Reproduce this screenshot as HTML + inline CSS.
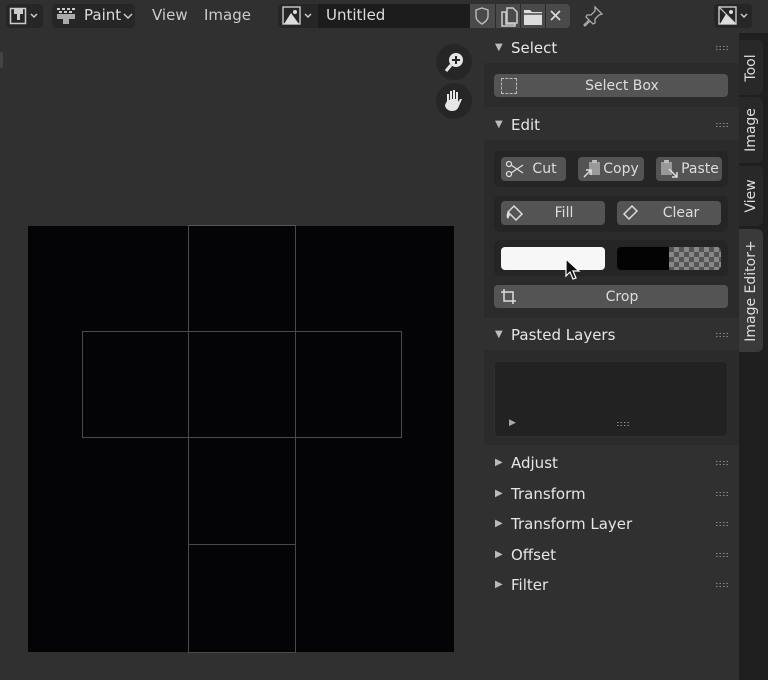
<!DOCTYPE html>
<html><head><meta charset="utf-8"><style>
*{margin:0;padding:0;box-sizing:border-box}
body{width:768px;height:680px;background:#303030;font-family:"DejaVu Sans","Liberation Sans",sans-serif;color:#ddd;position:relative;overflow:hidden;font-size:14px}
.a{position:absolute}
.btn{position:absolute;background:#545454;border-radius:4px;color:#ddd;font-size:14px;display:flex;align-items:center;justify-content:center}
.hdr{position:absolute;left:484px;width:255px;height:30px;font-size:15px;color:#e6e6e6}
.hdr .t{position:absolute;left:27px;top:6px}
.hdr .tri{position:absolute;left:11px;top:9px;font-size:10px;color:#bbb}
.dots{position:absolute;right:10px;top:12px;width:14px;height:5px;background-image:radial-gradient(#888 0.7px,transparent 0.8px);background-size:3.5px 3px}
.tab{position:absolute;left:739px;width:24px;background:#282828;border-radius:0 6px 6px 0;color:#ddd;font-size:14px}
.tab span{position:absolute;left:50%;top:50%;transform:translate(-50%,-50%) rotate(-90deg);white-space:nowrap}
.ln{position:absolute;background:#4a4a4a}
</style></head><body>
<div class="a" style="left:0;top:0;width:768px;height:32px;background:#303030"></div>
<div class="a" style="left:6px;top:4px;width:37px;height:24px;background:#262626;border-radius:4px"></div>
<svg class="a" style="left:9px;top:6px" width="32" height="20"><rect x="1.5" y="2.5" width="15" height="15" fill="none" stroke="#ccc" stroke-width="1.5"/><rect x="5" y="3" width="9" height="5" fill="#ccc"/><rect x="8" y="6" width="3" height="8" fill="#ccc"/><path d="M22 8l3 3 3-3" fill="none" stroke="#ccc" stroke-width="1.5"/></svg>
<div class="a" style="left:52px;top:4px;width:83px;height:24px;background:#262626;border-radius:4px"></div>
<svg class="a" style="left:56px;top:7px" width="20" height="18"><path d="M1 1h3v2H1zM6 1h3v2H6zM11 1h3v2h-3zM16 1h3v2h-3zM3 4h3v2H3zM8 4h3v2H8zM13 4h3v2h-3z" fill="#ccc"/><path d="M1 7h18v5h-6v5H7v-5H1z" fill="#aaa"/></svg>
<div class="a" style="left:84px;top:6px;font-size:15px;color:#ddd">Paint</div>
<svg class="a" style="left:123px;top:13px" width="10" height="6"><path d="M1 1l4 4 4-4" fill="none" stroke="#ccc" stroke-width="1.5"/></svg>
<div class="a" style="left:152px;top:6px;font-size:15px;color:#ccc">View</div>
<div class="a" style="left:204px;top:6px;font-size:15px;color:#ccc">Image</div>
<div class="a" style="left:278px;top:4px;width:40px;height:24px;background:#262626;border-radius:4px 0 0 4px"></div>
<svg class="a" style="left:282px;top:6px" width="34" height="20"><rect x="1" y="1" width="17" height="17" fill="none" stroke="#ccc" stroke-width="1.4"/><path d="M2 18l7-11 8 11z" fill="#ddd"/><circle cx="13" cy="6" r="2" fill="#ddd"/><path d="M23 8l3 3 3-3" fill="none" stroke="#ccc" stroke-width="1.5"/></svg>
<div class="a" style="left:318px;top:4px;width:152px;height:24px;background:#1c1c1c"></div>
<div class="a" style="left:326px;top:6px;font-size:15px;color:#ddd">Untitled</div>
<div class="a" style="left:470px;top:4px;width:100px;height:24px;background:#4a4a4a;border-radius:0 4px 4px 0"></div>
<div class="a" style="left:495px;top:4px;width:1px;height:24px;background:#2a2a2a"></div>
<div class="a" style="left:520px;top:4px;width:1px;height:24px;background:#2a2a2a"></div>
<div class="a" style="left:545px;top:4px;width:1px;height:24px;background:#2a2a2a"></div>
<svg class="a" style="left:470px;top:4px" width="100" height="24"><path d="M6 6l6-2 6 2v6c0 4-3 6-6 8-3-2-6-4-6-8z" fill="none" stroke="#bbb" stroke-width="1.4"/><path d="M32 8h4v12h9v2H32zM37 4h6l4 4v11h-10z" fill="none" stroke="#ccc" stroke-width="1.5"/><path d="M54 6h6l2 2h10v13H54z" fill="#ddd"/><path d="M54 10h18" stroke="#4a4a4a" stroke-width="1.5"/><path d="M81 7l9 9M90 7l-9 9" stroke="#ddd" stroke-width="1.6"/></svg>
<svg class="a" style="left:582px;top:5px" width="22" height="22"><path d="M13 2l7 7-3 1-4 4 0 4-2 1-3-3-5 5-1-1 5-5-3-3 1-2h4l4-4z" fill="none" stroke="#aaa" stroke-width="1.3"/></svg>
<div class="a" style="left:714px;top:4px;width:38px;height:24px;background:#262626;border-radius:4px"></div>
<svg class="a" style="left:718px;top:6px" width="32" height="20"><rect x="1" y="1" width="17" height="17" fill="none" stroke="#ccc" stroke-width="1.4"/><path d="M2 18l6-10 10 10z" fill="#ddd"/><path d="M1 1l17 17" stroke="#ccc" stroke-width="1.2"/><circle cx="13" cy="6" r="2" fill="#ddd"/><path d="M23 8l3 3 3-3" fill="none" stroke="#ccc" stroke-width="1.5"/></svg>
<div class="a" style="left:0;top:52px;width:3px;height:16px;background:#444;border-radius:0 2px 2px 0"></div>

<div class="a" style="left:28px;top:226px;width:426px;height:426px;background:#040406"></div>
<div class="a" style="left:188px;top:225px;width:108px;height:428px;border:1px solid #4a4a4a;border-top-color:#555"></div>
<div class="a" style="left:82px;top:331px;width:320px;height:107px;border:1px solid #4a4a4a"></div>
<div class="ln" style="left:188px;top:544px;width:107px;height:1px"></div>
<div class="a" style="left:436px;top:44px;width:36px;height:36px;border-radius:50%;background:#262626"></div>
<svg class="a" style="left:436px;top:44px" width="36" height="36"><circle cx="20" cy="16" r="7" fill="#e6e6e6"/><path d="M20 12v8M16 16h8" stroke="#262626" stroke-width="2"/><path d="M15 21l-5 6" stroke="#e6e6e6" stroke-width="3"/></svg>
<div class="a" style="left:436px;top:83px;width:36px;height:36px;border-radius:50%;background:#262626"></div>
<svg class="a" style="left:436px;top:83px" width="36" height="36"><path d="M11 18v-7h2v6h1v-9h2v8h1V7h2v9h1V9h2v10l2-3h2l-3 7c-1 3-3 5-7 5s-7-3-7-6z" fill="#e6e6e6"/></svg>

<div class="a" style="left:484px;top:33px;width:255px;height:420px;background:#303030"></div>
<div class="hdr" style="top:33px"><span class="tri">▼</span><span class="t">Select</span><div class="dots"></div></div>
<div class="a" style="left:484px;top:63px;width:255px;height:44px;background:#2b2b2b"></div>
<div class="btn" style="left:494px;top:74px;width:234px;height:23px;padding-left:22px">Select Box</div>
<div class="a" style="left:501px;top:78px;width:16px;height:16px;border:1.3px dashed #bbb"></div>
<div class="hdr" style="top:110px"><span class="tri">▼</span><span class="t">Edit</span><div class="dots"></div></div>
<div class="a" style="left:484px;top:140px;width:255px;height:178px;background:#2b2b2b"></div>
<div class="a" style="left:494px;top:151px;width:234px;height:36px;background:#252525;border-radius:5px"></div>
<div class="a" style="left:494px;top:196px;width:234px;height:36px;background:#252525;border-radius:5px"></div>
<div class="a" style="left:494px;top:240px;width:234px;height:36px;background:#252525;border-radius:5px"></div>
<div class="btn" style="left:501px;top:157px;width:65px;height:24px;padding-left:22px">Cut</div>
<svg class="a" style="left:505px;top:160px" width="20" height="18"><circle cx="4" cy="4" r="2.5" fill="none" stroke="#ddd" stroke-width="1.3"/><circle cx="4" cy="14" r="2.5" fill="none" stroke="#ddd" stroke-width="1.3"/><path d="M6 5l12 8M6 13l12-8" stroke="#ddd" stroke-width="1.3"/></svg>
<div class="btn" style="left:578px;top:157px;width:66px;height:24px;padding-left:20px">Copy</div>
<svg class="a" style="left:582px;top:159px" width="20" height="20"><rect x="7" y="3" width="11" height="13" fill="#999"/><rect x="10" y="1" width="5" height="3" fill="#bbb"/><path d="M2 18l7-7M4 11h5v5" fill="none" stroke="#ddd" stroke-width="1.5"/></svg>
<div class="btn" style="left:656px;top:157px;width:66px;height:24px;padding-left:22px">Paste</div>
<svg class="a" style="left:659px;top:159px" width="20" height="20"><rect x="2" y="3" width="11" height="13" fill="#999"/><rect x="5" y="1" width="5" height="3" fill="#bbb"/><path d="M10 10l8 8M13 18h5v-5" fill="none" stroke="#ddd" stroke-width="1.5"/></svg>
<div class="btn" style="left:501px;top:201px;width:104px;height:24px;padding-left:22px">Fill</div>
<svg class="a" style="left:505px;top:203px" width="22" height="20"><path d="M9 3l8 8-6 6-8-8z" fill="none" stroke="#ddd" stroke-width="1.5"/><path d="M4 8c-3 2-3 6-1 8l2-4z" fill="#ddd"/></svg>
<div class="btn" style="left:617px;top:201px;width:104px;height:24px;padding-left:24px">Clear</div>
<svg class="a" style="left:621px;top:203px" width="22" height="20"><path d="M3 11l8-8 5 5-8 8z" fill="none" stroke="#ddd" stroke-width="1.5"/></svg>
<div class="a" style="left:501px;top:247px;width:104px;height:23px;background:#f7f7f7;border-radius:4px"></div>
<div class="a" style="left:617px;top:247px;width:104px;height:23px;border-radius:4px;overflow:hidden;background:#030303"><div style="position:absolute;left:52px;top:0;width:52px;height:23px;background-color:#555;background-image:linear-gradient(45deg,#888 25%,transparent 25%,transparent 75%,#888 75%),linear-gradient(45deg,#888 25%,transparent 25%,transparent 75%,#888 75%);background-size:10px 10px;background-position:0 0,5px 5px"></div></div>
<svg class="a" style="left:565px;top:258px" width="16" height="24"><path d="M1 1v17l4-4 3 7 3-1-3-7h6z" fill="#111" stroke="#fff" stroke-width="1.2"/></svg>
<div class="btn" style="left:494px;top:285px;width:234px;height:23px;padding-left:22px">Crop</div>
<svg class="a" style="left:500px;top:288px" width="18" height="18"><path d="M4 1v12h12M1 4h12v12" fill="none" stroke="#ddd" stroke-width="1.5"/></svg>
<div class="hdr" style="top:320px"><span class="tri">▼</span><span class="t">Pasted Layers</span><div class="dots"></div></div>
<div class="a" style="left:484px;top:350px;width:255px;height:95px;background:#2b2b2b"></div>
<div class="a" style="left:494px;top:361px;width:234px;height:76px;background:#222;border-radius:5px;border:1px solid #2f2f2f"></div>
<div class="a" style="left:509px;top:418px;font-size:9px;color:#aaa">▶</div>
<div class="a" style="left:616px;top:421px;width:14px;height:5px;background-image:radial-gradient(#888 0.7px,transparent 0.8px);background-size:3.5px 3px"></div>
<div class="hdr" style="top:448px"><span class="tri">▶</span><span class="t">Adjust</span><div class="dots"></div></div>
<div class="hdr" style="top:479px"><span class="tri">▶</span><span class="t">Transform</span><div class="dots"></div></div>
<div class="hdr" style="top:509px"><span class="tri">▶</span><span class="t">Transform Layer</span><div class="dots"></div></div>
<div class="hdr" style="top:540px"><span class="tri">▶</span><span class="t">Offset</span><div class="dots"></div></div>
<div class="hdr" style="top:570px"><span class="tri">▶</span><span class="t">Filter</span><div class="dots"></div></div>

<div class="a" style="left:739px;top:33px;width:29px;height:647px;background:#1f1f1f"></div>
<div class="tab" style="top:40px;height:55px"><span>Tool</span></div>
<div class="tab" style="top:97px;height:66px"><span>Image</span></div>
<div class="tab" style="top:166px;height:60px"><span>View</span></div>
<div class="tab" style="top:229px;height:123px;background:#3a3a3a"><span>Image Editor+</span></div>
</body></html>
